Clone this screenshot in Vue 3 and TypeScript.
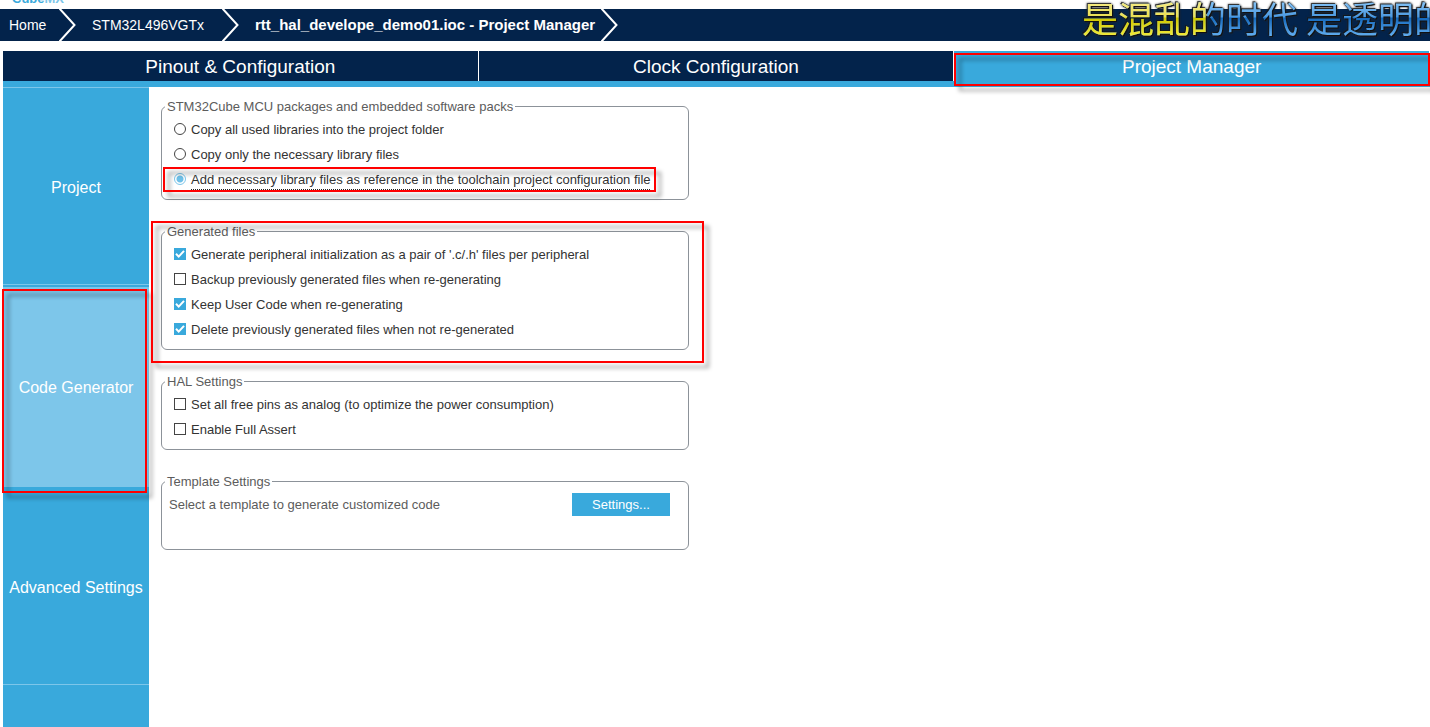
<script setup lang="ts">
import { ref } from 'vue'

interface Crumb {
  label: string
  size: string
}
interface Check {
  id: string
  label: string
  on: boolean
}

const crumbs: Crumb[] = [
  { label: 'Home', size: 'short' },
  { label: 'STM32L496VGTx', size: 'medium' },
  { label: 'rtt_hal_develope_demo01.ioc - Project Manager', size: 'current' },
]
const tabs = ['Pinout & Configuration', 'Clock Configuration', 'Project Manager']
const activeTab = ref('Project Manager')
const sections = ['Project', 'Code Generator', 'Advanced Settings']
const activeSection = ref('Code Generator')

const copyModes = [
  { id: 'copy-all', label: 'Copy all used libraries into the project folder' },
  { id: 'copy-needed', label: 'Copy only the necessary library files' },
  { id: 'reference', label: 'Add necessary library files as reference in the toolchain project configuration file' },
]
const copyMode = ref('reference')

const generated = ref<Check[]>([
  { id: 'pair', label: "Generate peripheral initialization as a pair of '.c/.h' files per peripheral", on: true },
  { id: 'backup', label: 'Backup previously generated files when re-generating', on: false },
  { id: 'keep', label: 'Keep User Code when re-generating', on: true },
  { id: 'delete', label: 'Delete previously generated files when not re-generated', on: true },
])
const hal = ref<Check[]>([
  { id: 'analog', label: 'Set all free pins as analog (to optimize the power consumption)', on: false },
  { id: 'assert', label: 'Enable Full Assert', on: false },
])
</script>

<template>
  <div class="app">
    <header class="brand"><span>Cube</span><span class="brand-light">MX</span></header>

    <nav class="crumbs" aria-label="Breadcrumb">
      <template v-for="c in crumbs" :key="c.label">
        <a href="#" class="crumb" :class="c.size">{{ c.label }}</a>
        <svg class="chevron" viewBox="0 0 17 32" aria-hidden="true">
          <path d="M0.5 -0.5 L15.5 16 L0.5 32.5" />
        </svg>
      </template>
    </nav>

    <div class="lyrics">是混乱的时代 是透明的</div>

    <nav class="tabs" aria-label="Views">
      <div v-for="t in tabs" :key="t" class="tab-cell">
        <button type="button" class="tab" :class="{ active: t === activeTab }" @click="activeTab = t">{{ t }}</button>
        <div v-if="t === 'Project Manager'" class="mark mark-tab"></div>
      </div>
    </nav>

    <div class="body">
      <nav class="side" aria-label="Sections">
        <div v-for="s in sections" :key="s" class="side-cell">
          <button type="button" class="side-item" :class="{ active: s === activeSection }" @click="activeSection = s">
            {{ s }}
          </button>
          <div v-if="s === 'Code Generator'" class="mark mark-side"></div>
        </div>
      </nav>

      <main class="content">
        <fieldset>
          <legend>STM32Cube MCU packages and embedded software packs</legend>
          <div v-for="m in copyModes" :key="m.id" class="row">
            <input :id="m.id" v-model="copyMode" type="radio" name="copy-mode" :value="m.id" />
            <label :for="m.id" :class="{ focused: m.id === copyMode }">{{ m.label }}</label>
            <div v-if="m.id === 'reference'" class="mark mark-row"></div>
          </div>
        </fieldset>

        <div class="group">
          <fieldset>
            <legend>Generated files</legend>
            <div v-for="g in generated" :key="g.id" class="row">
              <input :id="g.id" v-model="g.on" type="checkbox" />
              <svg class="tick" viewBox="0 0 12 12" aria-hidden="true"><path d="M2 5.8 L4.7 8.6 L10 2.8" /></svg>
              <label :for="g.id">{{ g.label }}</label>
            </div>
          </fieldset>
          <div class="mark mark-group"></div>
        </div>

        <fieldset>
          <legend>HAL Settings</legend>
          <div v-for="h in hal" :key="h.id" class="row">
            <input :id="h.id" v-model="h.on" type="checkbox" />
            <svg class="tick" viewBox="0 0 12 12" aria-hidden="true"><path d="M2 5.8 L4.7 8.6 L10 2.8" /></svg>
            <label :for="h.id">{{ h.label }}</label>
          </div>
        </fieldset>

        <fieldset>
          <legend>Template Settings</legend>
          <div class="template-row">
            <span>Select a template to generate customized code</span>
            <button type="button" class="settings">Settings...</button>
          </div>
        </fieldset>
      </main>
    </div>
  </div>
</template>

<style>
body {
  background: #fff;
}
</style>

<style scoped>
.app {
  --navy: #03234b;
  --blue: #39a9dc;
  --pale: #7dc6ea;
  position: relative;
  display: flex;
  flex-direction: column;
  height: 100vh;
  overflow: hidden;
  font: 13px/15px "Liberation Sans", Arial, sans-serif;
  color: #333;
}
.app * {
  box-sizing: border-box;
}
button {
  font-family: inherit;
  border: 0;
  margin: 0;
  cursor: pointer;
}

.brand {
  display: flex;
  align-items: flex-end;
  flex: none;
  height: 9px;
  padding: 0 0 4px 12px;
  overflow: hidden;
  font-weight: bold;
  line-height: 13px;
  color: var(--blue);
}
.brand-light {
  color: var(--pale);
}

.crumbs {
  display: flex;
  align-items: center;
  flex: none;
  height: 32px;
  padding-left: 9px;
  background: var(--navy);
}
.crumb {
  color: #fff;
  font-size: 14px;
  line-height: 18px;
  text-decoration: none;
  white-space: nowrap;
}
.short {
  min-width: 50px;
}
.medium {
  min-width: 130px;
}
.current {
  min-width: 346px;
  font-size: 15px;
  font-weight: bold;
}
.chevron {
  width: 17px;
  height: 32px;
  margin-right: 16px;
  fill: none;
  stroke: #fff;
  stroke-width: 2;
}

.lyrics {
  position: absolute;
  top: 0;
  right: 0;
  width: 348px;
  height: 41px;
  overflow: hidden;
  font: 36px/34px "Noto Sans CJK SC", sans-serif;
  white-space: nowrap;
  color: transparent;
  background:
    linear-gradient(#f8ec8c, #eadf52 17px, #cfc600 18px, #f2ea3c 36px) 0 0 / 125px 100% no-repeat,
    linear-gradient(#8cc8f8, #4a98e0 17px, #1468bc 18px, #62aef0 36px);
  -webkit-background-clip: text;
  background-clip: text;
  filter: drop-shadow(1px 1px 0 #111) drop-shadow(-1px -1px 0 rgba(20, 20, 20, 0.7)) drop-shadow(0 0 1px #222);
}

.tabs {
  display: grid;
  grid-template-columns: repeat(3, 1fr);
  flex: none;
  margin: 10px 0 0 3px;
  background: var(--navy);
  border-bottom: 6px solid var(--blue);
}
.tab-cell {
  position: relative;
  border-right: 1px solid #fff;
}
.tab {
  display: block;
  width: 100%;
  height: 30px;
  padding: 1px 0 0;
  background: var(--navy);
  color: #fff;
  font-size: 19px;
  line-height: 29px;
}
.tab.active {
  background: var(--blue);
}

.body {
  display: flex;
  flex: 1;
  padding-left: 3px;
}
.side {
  width: 146px;
  flex: none;
  background: var(--blue);
  box-shadow: inset 0 1px 0 var(--pale);
}
.side-cell {
  position: relative;
}
.side-item {
  display: block;
  width: 100%;
  height: 200px;
  padding: 3px 0 0;
  background: transparent;
  border-bottom: 2px solid transparent;
  box-shadow: inset 0 -1px 0 var(--pale);
  color: #fff;
  font-size: 16px;
  line-height: 20px;
  white-space: nowrap;
}
.side-item.active {
  background: var(--pale);
}

.content {
  display: flex;
  flex-direction: column;
  gap: 24px;
  flex: 1;
  max-width: 552px;
  padding: 12px;
}
.group {
  position: relative;
}
fieldset {
  margin: 0;
  min-width: 0;
  padding: 3px 18px 7px 7px;
  border: 1px solid #8c9299;
  border-radius: 6px;
}
legend {
  margin-left: -4px;
  padding: 0 2px;
  color: #5c5c5c;
}
.row {
  position: relative;
  display: flex;
  align-items: center;
  height: 25px;
  padding-left: 5px;
}
.row label {
  margin-left: 5px;
  line-height: 21px;
  white-space: nowrap;
}
.row label.focused {
  background: repeating-linear-gradient(90deg, #222 0 1px, transparent 1px 2px) 0 100% / 100% 1px no-repeat;
}
input {
  appearance: none;
  flex: none;
  width: 12px;
  height: 12px;
  margin: 0 0 2px;
  border: 1px solid #444;
  background: #fff;
}
input[type="radio"] {
  border-radius: 50%;
}
input[type="radio"]:checked {
  border-color: var(--pale);
  background: radial-gradient(circle, #6fc0e8 3px, #fff 4px);
}
input[type="checkbox"]:checked {
  border-color: var(--blue);
  background: var(--blue);
}
.tick {
  width: 12px;
  height: 12px;
  margin: 0 0 2px -12px;
  fill: none;
  stroke: #fff;
  stroke-width: 2;
  pointer-events: none;
}
.template-row {
  display: flex;
  justify-content: space-between;
  align-items: flex-start;
  height: 50px;
  padding-top: 1px;
  color: #5c5c5c;
  line-height: 23px;
}
.settings {
  width: 98px;
  height: 23px;
  padding: 0;
  background: var(--blue);
  color: #fff;
  font-size: 13px;
  line-height: 23px;
}

/* Red callouts laid over the interface */
.mark {
  position: absolute;
  z-index: 2;
  border: 2px solid #f00;
  filter: drop-shadow(5px 5px 2px rgba(0, 0, 0, 0.4));
  pointer-events: none;
}
.mark-tab {
  inset: 2px -1px -5px 0;
}
.mark-side {
  inset: 2px 2px -6px -1px;
}
.mark-row {
  inset: 0 14px 0 -6px;
}
.mark-group {
  inset: -3px -15px -13px -10px;
}
</style>
